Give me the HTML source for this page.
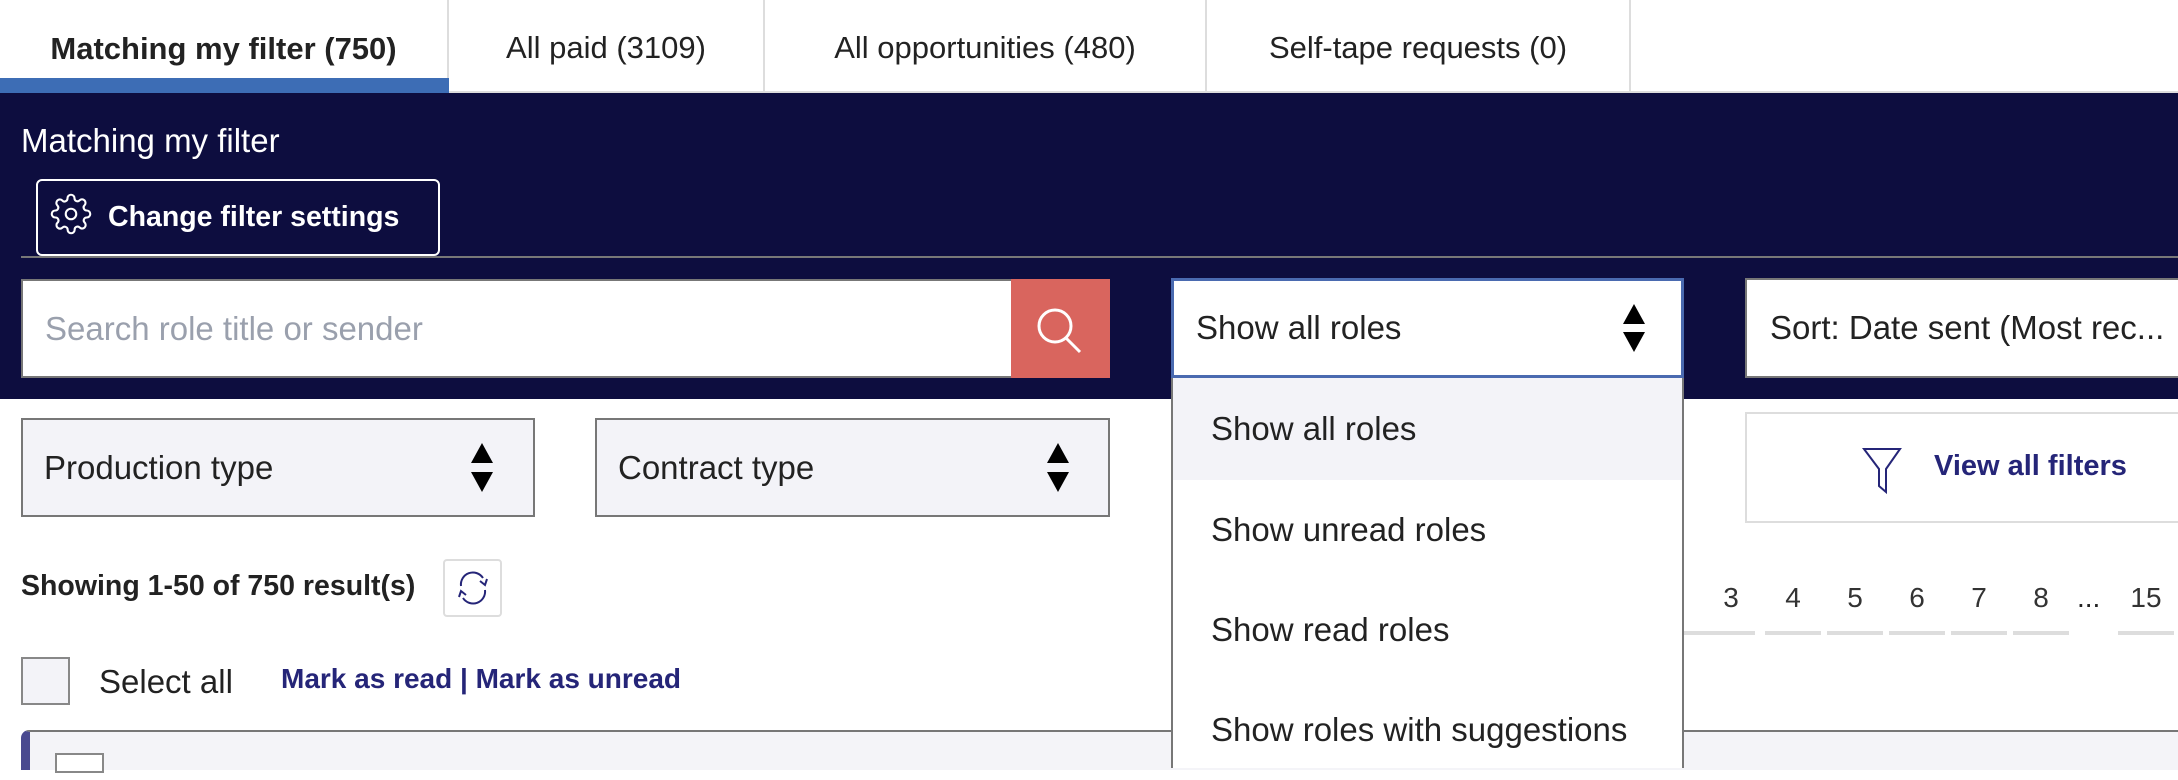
<!DOCTYPE html>
<html><head><meta charset="utf-8"><style>
*{margin:0;padding:0;box-sizing:border-box}
body{width:2178px;height:762px;overflow:hidden;background:#fff;font-family:"Liberation Sans",sans-serif;color:#222;position:relative}
.a{position:absolute}
.tab{position:absolute;top:0;height:93px;border-right:2px solid #ddd;border-bottom:2px solid #ddd;font-size:31px;display:flex;align-items:center;justify-content:center;color:#222;padding-top:4px;white-space:nowrap}
.arr{position:absolute;width:0;height:0;border-left:11px solid transparent;border-right:11px solid transparent}
.sel{position:absolute;display:flex;align-items:center;font-size:33px;white-space:nowrap}
.pg{position:absolute;top:582px;font-size:28px;color:#333;width:56px;text-align:center}
.ul{position:absolute;top:631px;height:4px;width:56px;background:#ddd}
</style></head><body>
<div class="tab" style="left:0;width:449px;font-weight:bold;border-bottom:none">Matching my filter (750)</div>
<div class="a" style="left:0;top:78px;width:449px;height:15px;background:#3d6db5"></div>
<div class="tab" style="left:449px;width:316px">All paid (3109)</div>
<div class="tab" style="left:765px;width:442px">All opportunities (480)</div>
<div class="tab" style="left:1207px;width:424px">Self-tape requests (0)</div>
<div class="a" style="left:1631px;top:91px;width:547px;height:2px;background:#ddd"></div>

<div class="a" style="left:0;top:93px;width:2178px;height:306px;background:#0d0d3f"></div>
<div class="a" style="left:21px;top:122px;color:#fff;font-size:33px">Matching my filter</div>
<div class="a" style="left:36px;top:179px;width:404px;height:77px;border:2px solid #fff;border-radius:6px;color:#fff;font-weight:bold;font-size:28.5px;display:flex;align-items:center;padding-left:70px;white-space:nowrap">Change filter settings</div>
<svg class="a" style="left:50px;top:192px" width="42" height="44" viewBox="0 0 24 24" fill="none" stroke="#fff" stroke-width="1.2"><circle cx="12" cy="12" r="3"/><path d="M19.4 15a1.650 1.65 0 0 0 .33 1.82l.06.06a2 2 0 1 1-2.830 2.830l-.06-.06a1.65 1.65 0 0 0-1.82-.33 1.65 1.65 0 0 0-1 1.51V21a2 2 0 1 1-4 0v-.09A1.65 1.65 0 0 0 9 19.4a1.65 1.65 0 0 0-1.82.33l-.06.06a2 2 0 1 1-2.83-2.83l.06-.06A1.65 1.65 0 0 0 4.68 15a1.65 1.65 0 0 0-1.51-1H3a2 2 0 1 1 0-4h.09A1.65 1.65 0 0 0 4.6 9a1.65 1.65 0 0 0-.33-1.82l-.06-.06a2 2 0 1 1 2.83-2.83l.06.06A1.65 1.65 0 0 0 9 4.68a1.65 1.65 0 0 0 1-1.510V3a2 2 0 1 1 4 0v.09a1.65 1.65 0 0 0 1 1.51 1.65 1.65 0 0 0 1.82-.33l.06-.06a2 2 0 1 1 2.83 2.83l-.06.06A1.65 1.65 0 0 0 19.4 9a1.65 1.65 0 0 0 1.51 1H21a2 2 0 1 1 0 4h-.09a1.65 1.65 0 0 0-1.51 1z"/></svg>
<div class="a" style="left:21px;top:256px;width:2157px;height:2px;background:#777"></div>

<div class="a" style="left:21px;top:279px;width:990px;height:99px;background:#fff;border:2px solid #777;border-right:none;font-size:33px;color:#9aa0ad;display:flex;align-items:center;padding-left:22px">Search role title or sender</div>
<div class="a" style="left:1011px;top:279px;width:99px;height:99px;background:#d9655e"></div>
<svg class="a" style="left:1032px;top:303px" width="56" height="56" viewBox="0 0 56 56" fill="none" stroke="#fff" stroke-width="3"><circle cx="23" cy="23" r="16"/><path d="M34 35l14 14"/></svg>

<div class="sel" style="left:1171px;top:278px;width:513px;height:100px;background:#fff;border:3px solid #4a6ab0;padding-left:22px">Show all roles</div>
<div class="arr" style="left:1623px;top:304px;border-bottom:20px solid #000"></div>
<div class="arr" style="left:1623px;top:332px;border-top:20px solid #000"></div>
<div class="sel" style="left:1745px;top:278px;width:460px;height:100px;background:#fff;border:2px solid #777;padding-left:23px;overflow:hidden">Sort: Date sent (Most rec...</div>

<div class="sel" style="left:21px;top:418px;width:514px;height:99px;background:#f3f3f8;border:2px solid #777;padding-left:21px">Production type</div>
<div class="arr" style="left:471px;top:443px;border-bottom:20px solid #000"></div>
<div class="arr" style="left:471px;top:472px;border-top:20px solid #000"></div>
<div class="sel" style="left:595px;top:418px;width:515px;height:99px;background:#f3f3f8;border:2px solid #777;padding-left:21px">Contract type</div>
<div class="arr" style="left:1047px;top:443px;border-bottom:20px solid #000"></div>
<div class="arr" style="left:1047px;top:472px;border-top:20px solid #000"></div>

<div class="a" style="left:1745px;top:412px;width:450px;height:111px;border:2px solid #ddd;background:#fff"></div>
<svg class="a" style="left:1862px;top:447px" width="40" height="48" viewBox="0 0 40 48" fill="none" stroke="#252578" stroke-width="2"><path d="M2 2h36L24 22v23l-7-6V22z"/></svg>
<div class="a" style="left:1934px;top:450px;font-size:29px;font-weight:bold;color:#252578;white-space:nowrap">View all filters</div>

<div class="a" style="left:21px;top:570px;font-size:28.5px;font-weight:bold;color:#222;white-space:nowrap">Showing 1-50 of 750 result(s)</div>
<div class="a" style="left:443px;top:559px;width:59px;height:58px;border:2px solid #ddd;border-radius:4px"></div>
<svg class="a" style="left:453px;top:568px" width="40" height="40" viewBox="0 0 40 40" fill="none" stroke="#252578" stroke-width="2"><path d="M8 18A12 12 0 0 1 30 10"/><path d="M32 22A12 12 0 0 1 10 30"/><path d="M27 13l5 4 2-6"/><path d="M13 27l-5-4-2 6"/></svg>

<div class="a" style="left:21px;top:657px;width:49px;height:48px;background:#f3f3f8;border:2px solid #888"></div>
<div class="a" style="left:99px;top:663px;font-size:33px;white-space:nowrap">Select all</div>
<div class="a" style="left:281px;top:663px;font-size:28px;font-weight:bold;color:#252578;white-space:nowrap">Mark as read | Mark as unread</div>

<div class="pg" style="left:1703px">3</div><div class="pg" style="left:1765px">4</div><div class="pg" style="left:1827px">5</div><div class="pg" style="left:1889px">6</div><div class="pg" style="left:1951px">7</div><div class="pg" style="left:2013px">8</div><div class="a" style="left:2077px;top:582px;font-size:28px">...</div><div class="pg" style="left:2118px">15</div>
<div class="ul" style="left:1684px;width:71px"></div><div class="ul" style="left:1765px"></div><div class="ul" style="left:1827px"></div><div class="ul" style="left:1889px"></div><div class="ul" style="left:1951px"></div><div class="ul" style="left:2013px"></div><div class="ul" style="left:2118px"></div>

<div class="a" style="left:21px;top:730px;width:2157px;height:40px;background:#f4f4f8;border-top:2px solid #777;border-left:9px solid #4a4a8f;border-top-left-radius:8px"></div>
<div class="a" style="left:55px;top:753px;width:49px;height:20px;border:2px solid #888;background:#fff"></div>

<div class="a" style="left:1171px;top:378px;width:513px;height:390px;background:#fff;border-left:2px solid #777;border-right:2px solid #777">
<div style="height:102px;background:#f3f3f8;font-size:33px;display:flex;align-items:center;padding-left:38px;white-space:nowrap">Show all roles</div>
<div style="height:100px;font-size:33px;display:flex;align-items:center;padding-left:38px;white-space:nowrap">Show unread roles</div>
<div style="height:100px;font-size:33px;display:flex;align-items:center;padding-left:38px;white-space:nowrap">Show read roles</div>
<div style="height:100px;font-size:33px;display:flex;align-items:center;padding-left:38px;white-space:nowrap">Show roles with suggestions</div>
</div>
</body></html>
